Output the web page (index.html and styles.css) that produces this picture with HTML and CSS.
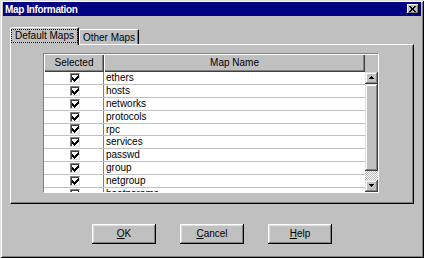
FILE: index.html
```html
<!DOCTYPE html>
<html>
<head>
<meta charset="utf-8">
<link rel="stylesheet" href="styles.css">
</head>
<body>
<div class="window">
  <div class="titlebar">
    <span class="title">Map Information</span>
    <div class="close"><svg width="7" height="6" viewBox="0 0 7 6"><path d="M0 0h2v1h-2z M5 0h2v1h-2z M1 1h2v1h-2z M4 1h2v1h-2z M2 2h3v2h-3z M1 4h2v1h-2z M4 4h2v1h-2z M0 5h2v1h-2z M5 5h2v1h-2z" fill="#000"/></svg></div>
  </div>
  <div class="content">
    <div class="tabs">
      <div class="tab active"><span class="focus">Default Maps</span></div>
      <div class="tab">Other Maps</div>
    </div>
    <div class="panel">
      <div class="listview">
        <div class="grid">
          <div class="header">
            <div class="hcell hsel">Selected</div>
            <div class="hcell hname">Map Name</div>
          </div>
          <div class="rows">
            <div class="row"><div class="cell sel"><span class="check"><svg width="7" height="7" viewBox="0 0 7 7"><path d="M6 0h1v3h-1z M5 1h1v3h-1z M4 2h1v3h-1z M3 3h1v3h-1z M2 4h1v3h-1z M1 3h1v3h-1z M0 2h1v3h-1z" fill="#000"/></svg></span></div><div class="cell name">ethers</div></div>
            <div class="row"><div class="cell sel"><span class="check"><svg width="7" height="7" viewBox="0 0 7 7"><path d="M6 0h1v3h-1z M5 1h1v3h-1z M4 2h1v3h-1z M3 3h1v3h-1z M2 4h1v3h-1z M1 3h1v3h-1z M0 2h1v3h-1z" fill="#000"/></svg></span></div><div class="cell name">hosts</div></div>
            <div class="row"><div class="cell sel"><span class="check"><svg width="7" height="7" viewBox="0 0 7 7"><path d="M6 0h1v3h-1z M5 1h1v3h-1z M4 2h1v3h-1z M3 3h1v3h-1z M2 4h1v3h-1z M1 3h1v3h-1z M0 2h1v3h-1z" fill="#000"/></svg></span></div><div class="cell name">networks</div></div>
            <div class="row"><div class="cell sel"><span class="check"><svg width="7" height="7" viewBox="0 0 7 7"><path d="M6 0h1v3h-1z M5 1h1v3h-1z M4 2h1v3h-1z M3 3h1v3h-1z M2 4h1v3h-1z M1 3h1v3h-1z M0 2h1v3h-1z" fill="#000"/></svg></span></div><div class="cell name">protocols</div></div>
            <div class="row"><div class="cell sel"><span class="check"><svg width="7" height="7" viewBox="0 0 7 7"><path d="M6 0h1v3h-1z M5 1h1v3h-1z M4 2h1v3h-1z M3 3h1v3h-1z M2 4h1v3h-1z M1 3h1v3h-1z M0 2h1v3h-1z" fill="#000"/></svg></span></div><div class="cell name">rpc</div></div>
            <div class="row"><div class="cell sel"><span class="check"><svg width="7" height="7" viewBox="0 0 7 7"><path d="M6 0h1v3h-1z M5 1h1v3h-1z M4 2h1v3h-1z M3 3h1v3h-1z M2 4h1v3h-1z M1 3h1v3h-1z M0 2h1v3h-1z" fill="#000"/></svg></span></div><div class="cell name">services</div></div>
            <div class="row"><div class="cell sel"><span class="check"><svg width="7" height="7" viewBox="0 0 7 7"><path d="M6 0h1v3h-1z M5 1h1v3h-1z M4 2h1v3h-1z M3 3h1v3h-1z M2 4h1v3h-1z M1 3h1v3h-1z M0 2h1v3h-1z" fill="#000"/></svg></span></div><div class="cell name">passwd</div></div>
            <div class="row"><div class="cell sel"><span class="check"><svg width="7" height="7" viewBox="0 0 7 7"><path d="M6 0h1v3h-1z M5 1h1v3h-1z M4 2h1v3h-1z M3 3h1v3h-1z M2 4h1v3h-1z M1 3h1v3h-1z M0 2h1v3h-1z" fill="#000"/></svg></span></div><div class="cell name">group</div></div>
            <div class="row"><div class="cell sel"><span class="check"><svg width="7" height="7" viewBox="0 0 7 7"><path d="M6 0h1v3h-1z M5 1h1v3h-1z M4 2h1v3h-1z M3 3h1v3h-1z M2 4h1v3h-1z M1 3h1v3h-1z M0 2h1v3h-1z" fill="#000"/></svg></span></div><div class="cell name">netgroup</div></div>
            <div class="row"><div class="cell sel"><span class="check"><svg width="7" height="7" viewBox="0 0 7 7"><path d="M6 0h1v3h-1z M5 1h1v3h-1z M4 2h1v3h-1z M3 3h1v3h-1z M2 4h1v3h-1z M1 3h1v3h-1z M0 2h1v3h-1z" fill="#000"/></svg></span></div><div class="cell name">bootparams</div></div>
          </div>
        </div>
        <div class="scrollbar">
          <div class="corner"></div>
          <div class="sbtn"><svg width="5" height="3" viewBox="0 0 5 3"><path d="M2 0h1v1h1v1h1v1h-5v-1h1v-1h1z" fill="#000"/></svg></div>
          <div class="thumb"></div>
          <div class="track"></div>
          <div class="sbtn"><svg width="5" height="3" viewBox="0 0 5 3"><path d="M0 0h5v1h-1v1h-1v1h-1v-1h-1v-1h-1z" fill="#000"/></svg></div>
        </div>
      </div>
    </div>
    <div class="buttons">
      <div class="btn"><u>O</u>K</div>
      <div class="btn"><u>C</u>ancel</div>
      <div class="btn"><u>H</u>elp</div>
    </div>
  </div>
</div>
</body>
</html>
```
FILE: styles.css
```css
* { box-sizing: border-box; margin: 0; padding: 0; }
html, body { width: 424px; height: 258px; overflow: hidden; }
body {
  background: #c0c0c0;
  font-family: "Liberation Sans", Arial, sans-serif;
  font-size: 10px;
  color: #000;
}
.window {
  width: 424px;
  height: 258px;
  background: #c0c0c0;
  padding: 2px 3px 3px 3px;
  box-shadow: inset 1px 1px #dfdfdf, inset -1px -1px #000, inset 2px 2px #fff, inset -2px -2px #808080;
  display: flex;
  flex-direction: column;
}
.titlebar {
  height: 14px;
  background: #000080;
  display: flex;
  align-items: center;
  justify-content: space-between;
  padding: 0 2px 0 2px;
}
.title {
  color: #fff;
  font-weight: bold;
  font-size: 10px;
  letter-spacing: -0.35px;
}
.close {
  width: 12px;
  height: 10px;
  background: #c0c0c0;
  box-shadow: inset -1px -1px #000, inset 1px 1px #fff, inset -2px -2px #808080;
  display: flex;
  align-items: center;
  justify-content: center;
  padding: 0 1px 1px 0;
}
.close svg { display: block; }
.content {
  flex: 1;
  padding-top: 11px;
  display: flex;
  flex-direction: column;
}
.tabs {
  display: flex;
  align-items: flex-end;
  height: 17px;
  margin-left: 7px;
  position: relative;
  z-index: 1;
}
.tab {
  background: #c0c0c0;
  border-top: 1px solid #fff;
  border-left: 1px solid #fff;
  border-right: 1px solid #000;
  box-shadow: inset -1px 0 #808080;
  border-top-left-radius: 2px;
  border-top-right-radius: 1px;
  display: flex;
  align-items: center;
  justify-content: center;
}
.tab.active {
  width: 69px;
  height: 18px;
  margin-bottom: -1px;
  padding-bottom: 1px;
}
.tab:not(.active) {
  width: 60px;
  height: 15px;
  padding-top: 1px;
}
.focus {
  outline: 1px dotted #000;
  padding: 0 3px;
  height: 12px;
  line-height: 12px;
}
.panel {
  height: 160px;
  margin: 0 7px;
  border-top: 1px solid #fff;
  border-left: 1px solid #fff;
  border-right: 1px solid #000;
  border-bottom: 1px solid #000;
  box-shadow: inset -1px -1px #808080;
  padding: 8px 0 0 32px;
}
.listview {
  width: 336px;
  height: 140px;
  border: 1px solid;
  border-color: #808080 #fff #fff #808080;
  background: #fff;
  display: flex;
  overflow: hidden;
}
.grid {
  width: 321px;
  display: flex;
  flex-direction: column;
}
.header {
  display: flex;
  height: 18px;
  flex-shrink: 0;
}
.hcell {
  background: #c0c0c0;
  box-shadow: inset 1px 1px #fff, inset -1px -1px #404040, inset -2px -2px #808080;
  display: flex;
  align-items: center;
  justify-content: center;
  padding-bottom: 1px;
}
.hsel { width: 60px; }
.hname { width: 261px; }
.rows {
  flex: 1;
  overflow: hidden;
}
.row {
  display: flex;
  height: 12.875px;
  border-bottom: 1px solid #c0c0c0;
}
.cell {
  line-height: 11.875px;
  white-space: nowrap;
}
.cell.sel {
  width: 60px;
  border-right: 1px solid #808080;
  padding-left: 26px;
  display: flex;
  align-items: center;
}
.cell.name {
  flex: 1;
  padding-left: 2px;
}
.check {
  width: 10px;
  height: 10px;
  border: 1px solid;
  border-color: #808080 #dfdfdf #dfdfdf #808080;
  box-shadow: inset 1px 1px #404040;
  background: #fff;
  display: block;
  padding: 1px 0 0 1px;
}
.check svg { display: block; }
.scrollbar {
  width: 13px;
  display: flex;
  flex-direction: column;
}
.corner {
  height: 18px;
  background: #c0c0c0;
  box-shadow: inset 0 1px #fff;
}
.sbtn {
  height: 12px;
  background: #c0c0c0;
  box-shadow: inset -1px -1px #404040, inset 1px 1px #dfdfdf, inset -2px -2px #808080, inset 2px 2px #fff;
  display: flex;
  align-items: center;
  justify-content: center;
  padding: 0 1px 1px 0;
}
.sbtn svg { display: block; }
.thumb {
  height: 87px;
  background: #c0c0c0;
  box-shadow: inset -1px -1px #404040, inset 1px 1px #dfdfdf, inset -2px -2px #808080, inset 2px 2px #fff;
}
.track {
  height: 9px;
  background: conic-gradient(#fff 25%, #c0c0c0 0 50%, #fff 0 75%, #c0c0c0 0) 0 0 / 2px 2px;
}
.buttons {
  display: flex;
  justify-content: center;
  gap: 24px;
  margin-top: 20px;
}
.btn {
  width: 64px;
  height: 20px;
  background: #c0c0c0;
  box-shadow: inset -1px -1px #000, inset 1px 1px #fff, inset -2px -2px #808080, inset 2px 2px #dfdfdf;
  display: flex;
  align-items: center;
  justify-content: center;
  padding-bottom: 1px;
}
.btn u { text-decoration-thickness: 1px; text-underline-offset: 1px; }
```
